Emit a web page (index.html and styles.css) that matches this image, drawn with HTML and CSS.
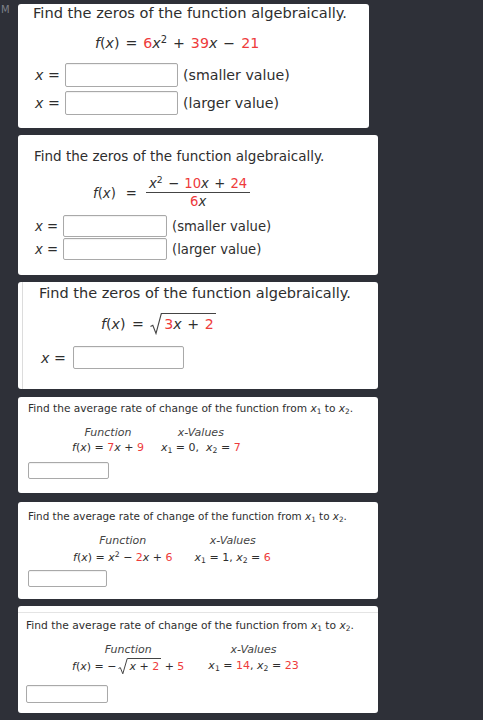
FILE: index.html
```html
<!DOCTYPE html>
<html>
<head>
<meta charset="utf-8">
<link rel="stylesheet" href="styles.css">
</head>
<body>
<div class="edge-label">M</div>
<main class="stack">

  <section class="card c1">
    <p class="title">Find the zeros of the function algebraically.</p>
    <div class="formula f1">
      <span><i>f</i>(<i>x</i>)</span><span class="op">=</span><span><span class="r">6</span><i>x</i><sup>2</sup></span><span class="op">+</span><span><span class="r">39</span><i>x</i></span><span class="op">−</span><span class="r">21</span>
    </div>
    <div class="rows r1">
      <div class="row"><span class="xeq"><i>x</i> =</span><span class="inp"></span><span class="hint">(smaller value)</span></div>
      <div class="row"><span class="xeq"><i>x</i> =</span><span class="inp"></span><span class="hint">(larger value)</span></div>
    </div>
  </section>

  <section class="card c2">
    <p class="title">Find the zeros of the function algebraically.</p>
    <div class="formula f2">
      <span><i>f</i>(<i>x</i>)</span><span class="op">=</span>
      <span class="frac">
        <span class="num"><span><i>x</i><sup>2</sup></span><span class="op">−</span><span><span class="r">10</span><i>x</i></span><span class="op">+</span><span class="r">24</span></span>
        <span class="den"><span class="r">6</span><i>x</i></span>
      </span>
    </div>
    <div class="rows r2">
      <div class="row"><span class="xeq"><i>x</i> =</span><span class="inp"></span><span class="hint">(smaller value)</span></div>
      <div class="row"><span class="xeq"><i>x</i> =</span><span class="inp"></span><span class="hint">(larger value)</span></div>
    </div>
  </section>

  <section class="card c3">
    <div class="inner">
      <p class="title">Find the zeros of the function algebraically.</p>
      <div class="formula f3">
        <span><i>f</i>(<i>x</i>)</span><span class="op">=</span>
        <span class="sqrt"><svg class="rad" viewBox="0 0 12 22" width="12" height="22"><path d="M0.5 13.5 L2.8 12.3 L6 20.5 L11.3 0.6 L12 0.6" fill="none" stroke="#444" stroke-width="1.1"/></svg><span class="under"><span class="r">3</span><i>x</i><span class="op">+</span><span class="r">2</span></span></span>
      </div>
      <div class="row r3"><span class="xeq"><i>x</i> =</span><span class="inp"></span></div>
    </div>
  </section>

  <section class="card c4">
    <p class="title">Find the average rate of change of the function from <i>x</i><sub>1</sub> to <i>x</i><sub>2</sub>.</p>
    <div class="table t4">
      <span class="head">Function</span><span class="head">x-Values</span>
      <span><i>f</i>(<i>x</i>) <span class="op">=</span> <span class="r">7</span><i>x</i> <span class="op">+</span> <span class="r">9</span></span>
      <span><i>x</i><sub>1</sub> = 0,&nbsp; <i>x</i><sub>2</sub> = <span class="r">7</span></span>
    </div>
    <span class="inp small i4"></span>
  </section>

  <section class="card c5">
    <p class="title">Find the average rate of change of the function from <i>x</i><sub>1</sub> to <i>x</i><sub>2</sub>.</p>
    <div class="table t5">
      <span class="head">Function</span><span class="head">x-Values</span>
      <span><i>f</i>(<i>x</i>) = <i>x</i><sup>2</sup> <span class="op">−</span> <span class="r">2</span><i>x</i> <span class="op">+</span> <span class="r">6</span></span>
      <span><i>x</i><sub>1</sub> = 1, <i>x</i><sub>2</sub> = <span class="r">6</span></span>
    </div>
    <span class="inp small i5"></span>
  </section>

  <section class="card c6">
    <div class="topline"></div>
    <p class="title">Find the average rate of change of the function from <i>x</i><sub>1</sub> to <i>x</i><sub>2</sub>.</p>
    <div class="table t6">
      <span class="head">Function</span><span class="head">x-Values</span>
      <span class="sq-row"><i>f</i>(<i>x</i>) = −<span class="sqrt small-sqrt"><svg class="rad" viewBox="0 0 10 17" width="10" height="17"><path d="M0.5 10.5 L2.3 9.6 L4.8 15.8 L9.2 0.6 L10 0.6" fill="none" stroke="#444" stroke-width="1"/></svg><span class="under"><i>x</i> + <span class="r">2</span></span></span>&nbsp;+ <span class="r">5</span></span>
      <span><i>x</i><sub>1</sub> = <span class="r">14</span>, <i>x</i><sub>2</sub> = <span class="r">23</span></span>
    </div>
    <span class="inp small i6"></span>
  </section>

</main>
</body>
</html>
```

FILE: styles.css
```css
html, body {
  margin: 0;
  padding: 0;
}
body {
  background: #2e3038;
  width: 483px;
  height: 720px;
  overflow: hidden;
  position: relative;
  font-family: "DejaVu Sans", Verdana, sans-serif;
  color: #2e2e2e;
}
.edge-label {
  position: absolute;
  left: 1px;
  top: 4px;
  font-size: 10px;
  color: #7d8088;
}
.stack {
  display: flex;
  flex-direction: column;
  padding-left: 18px;
}
.card {
  background: #fff;
  border-radius: 3px;
  box-sizing: border-box;
  position: relative;
}
p { margin: 0; }
i { font-style: italic; }
.r { color: #ee3b3b; }
sup { font-size: 70%; vertical-align: 0.5em; line-height: 0; }
sub { font-size: 70%; vertical-align: -0.3em; line-height: 0; }

.formula {
  display: flex;
  align-items: center;
}
.op { padding: 0 0.45em; }

.row {
  display: flex;
  align-items: center;
}
.inp {
  display: block;
  box-sizing: border-box;
  background: #fff;
  border: 1px solid #a9a9a9;
  border-radius: 2px;
  box-shadow: inset 0 1px 1px rgba(0,0,0,0.06);
}

/* card 1 */
.c1 {
  margin-top: 4px;
  width: 351px;
  height: 124px;
  font-size: 14.6px;
  padding: 0 0 0 15px;
}
.c1 .title { line-height: 17px; padding-top: 0; }
.f1 { margin: 13px 0 0 62px; height: 18px; font-size: 14.2px; }
.f1 .op { padding: 0 0.42em; }
.r1 { margin-top: 11px; display: flex; flex-direction: column; gap: 4px; font-size: 14.2px; }
.r1 .xeq { width: 26px; margin-left: 2px; margin-right: 4px; }
.r1 .inp { width: 113px; height: 24px; }
.r1 .hint { margin-left: 5px; }

/* card 2 */
.c2 {
  margin-top: 7px;
  width: 360px;
  height: 140px;
  font-size: 13.2px;
  padding: 13px 0 0 16px;
}
.c2 .title { line-height: 16px; font-size: 13.5px; }
.f2 { margin: 12px 0 0 59px; }
.f2 > .op { padding: 0 0.7em 0 0.75em; }
.frac {
  display: inline-flex;
  flex-direction: column;
  align-items: center;
}
.num {
  display: flex;
  border-bottom: 1px solid #444;
  padding: 0 3px 1px;
  line-height: 15px;
}
.num .op { padding: 0 0.4em; }
.den { line-height: 16px; padding-top: 1px; }
.r2 { margin-top: 5px; display: flex; flex-direction: column; gap: 1px; }
.r2 .xeq { width: 26px; margin-left: 1px; margin-right: 2px; }
.r2 .inp { width: 104px; height: 22px; }
.r2 .hint { margin-left: 5px; }

/* card 3 */
.c3 {
  margin-top: 7px;
  width: 360px;
  height: 107px;
  font-size: 14.2px;
  padding: 0 0 0 4px;
}
.c3 .inner {
  border-left: 1px solid #dcdcdc;
  height: 100%;
  padding: 3px 0 0 16px;
  box-sizing: border-box;
}
.c3 .title { line-height: 17px; font-size: 14.5px; }
.f3 { margin: 11px 0 0 62px; }
.f3 > .op { padding: 0 0.45em; }
.sqrt {
  display: inline-flex;
  align-items: flex-start;
}
.under {
  display: inline-flex;
  border-top: 1.2px solid #444;
  padding: 2px 2px 0 2px;
  line-height: 16px;
}
.under .op { padding: 0 0.4em; }
.rad { display: block; }
.r3 { margin-top: 11px; }
.r3 .xeq { width: 27px; margin-left: 2px; margin-right: 5px; }
.r3 .inp { width: 111px; height: 23px; }

/* cards 4-6 */
.c4, .c5, .c6 {
  width: 360px;
  font-size: 11px;
}
.table {
  display: grid;
  grid-template-columns: max-content max-content;
  justify-content: start;
  justify-items: center;
  line-height: 15px;
}
.head { font-style: italic; color: #444; }
.table .op { padding: 0; }

.c4 { margin-top: 8px; height: 96px; padding: 4px 0 0 10px; }
.c4 .title { line-height: 14px; font-size: 10.6px; }
.t4 { margin: 10px 0 0 44px; column-gap: 17px; }
.i4 { width: 81px; height: 17px; margin-top: 7px; }

.c5 { margin-top: 9px; height: 97px; padding: 7px 0 0 10px; }
.c5 .title { line-height: 14px; font-size: 10.4px; }
.t5 { margin: 9px 0 0 45px; column-gap: 22px; line-height: 17px; }
.i5 { width: 79px; height: 17px; margin-top: 4px; }

.c6 { margin-top: 7px; height: 107px; padding: 0 0 0 8px; }
.c6 .topline { height: 6px; border-bottom: 1px solid #e4e4e4; margin-left: -8px; }
.c6 .title { line-height: 14px; font-size: 10.7px; margin-top: 6px; }
.t6 { margin: 9px 0 0 46px; column-gap: 24px; line-height: 16px; }
.sq-row { display: inline-flex; align-items: flex-end; white-space: pre; }
.small-sqrt { margin-left: 2px; }
.small-sqrt .under { padding: 1px 2px 0 1px; line-height: 14px; border-top-width: 1px; white-space: pre; }
.i6 { width: 82px; height: 18px; margin-top: 10px; }
```
